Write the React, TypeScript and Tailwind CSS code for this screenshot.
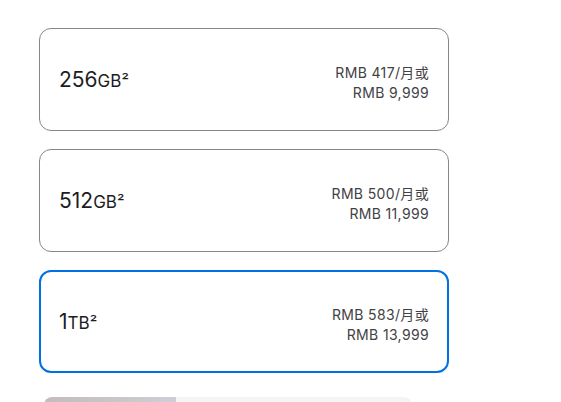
const options = [
  { size: "256", unit: "GB", monthly: "RMB 417/月或", total: "RMB 9,999" },
  { size: "512", unit: "GB", monthly: "RMB 500/月或", total: "RMB 11,999" },
  { size: "1", unit: "TB", monthly: "RMB 583/月或", total: "RMB 13,999" },
];

export default function App() {
  const selected = 2;
  return (
    <div className="min-h-[402px] w-[561px] overflow-hidden bg-white font-['Inter','Noto_Sans_CJK_SC',sans-serif]">
      <div className="flex w-[449px] flex-col gap-[18px] pl-[39px] pt-[28px]">
        {options.map((o, i) => (
          <div
            key={o.size}
            className={`flex h-[103px] items-center justify-between rounded-[12px] ${
              i === selected ? "border-2 border-[#0071e3] pl-[18px] pr-[18px]" : "border border-[#86868b] pl-[19px] pr-[19px]"
            }`}
          >
            <p className="text-[21px] leading-none text-[#1d1d1f]">
              {o.size}
              <span className="text-[17px]">{o.unit}²</span>
            </p>
            <div className="mt-[6px] text-right text-[14px] leading-[20px] tracking-[0.35px] text-[#424245]">
              <p>{o.monthly}</p>
              <p>{o.total}</p>
            </div>
          </div>
        ))}
        <div className="ml-[5px] mt-[6px] h-[8px] w-[368px] rounded-t-[10px] bg-gradient-to-r from-[#c4bcbc] via-[#cfcdd6] via-[36%] to-[#f4f4f4] to-[36%]" />
      </div>
    </div>
  );
}
